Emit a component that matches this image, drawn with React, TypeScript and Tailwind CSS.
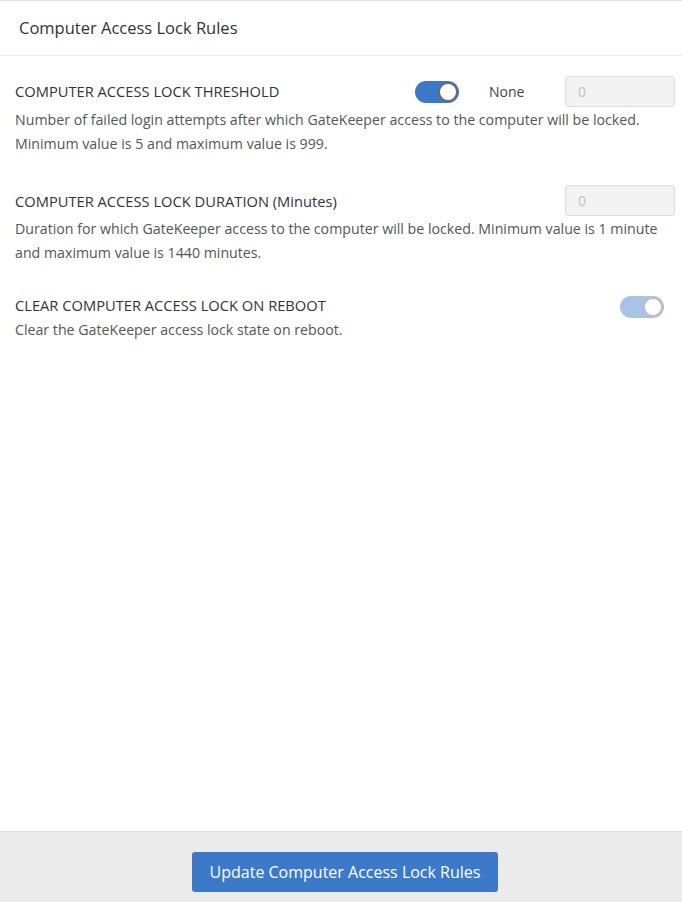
import React from "react";

function Toggle({ light = false }: { light?: boolean }) {
  return (
    <div
      className={
        "relative h-[22px] w-[44px] shrink-0 rounded-full " +
        (light ? "bg-[#a9c3e6]" : "bg-[#3c78c8]")
      }
    >
      <div
        className={
          "absolute right-[1px] top-[1px] h-[20px] w-[20px] rounded-full bg-white border-[2px] " +
          (light ? "border-[#bfbfbf]" : "border-[#6b6b6b]")
        }
      />
    </div>
  );
}

function NumInput() {
  return (
    <div className="flex h-[31px] w-[110px] shrink-0 items-center rounded-[3px] border border-[#dcdcdc] bg-[#f3f3f3] pl-[12px] text-[14px] text-[#c4c4c4]">
      0
    </div>
  );
}

export default function App() {
  return (
    <div
      className="flex h-[902px] w-[682px] flex-col border-t border-[#e3e3e3] bg-white"
      style={{ fontFamily: '"Open Sans", "Noto Sans", sans-serif' }}
    >
      <div className="flex h-[55px] shrink-0 items-center border-b border-[#ececec] pl-[19px] text-[16.5px] text-[#333]">
        Computer Access Lock Rules
      </div>
      <div className="flex-1 pl-[15px] pr-[7px] pt-[20px]">
        <div>
          <div className="flex h-[31px] items-center">
            <div className="flex-1 text-[14.7px] text-[#333]">COMPUTER ACCESS LOCK THRESHOLD</div>
            <Toggle />
            <div className="ml-[30px] w-[40px] text-[14px] text-[#444]">None</div>
            <div className="ml-[36px]">
              <NumInput />
            </div>
          </div>
          <div className="mt-[1px] text-[14.2px] leading-[24px] text-[#555]">
            Number of failed login attempts after which GateKeeper access to the computer will be locked. Minimum value is 5 and maximum value is 999.
          </div>
        </div>
        <div className="mt-[29px]">
          <div className="flex h-[31px] items-center">
            <div className="flex-1 pt-[2px] text-[14.7px] text-[#333]">COMPUTER ACCESS LOCK DURATION (Minutes)</div>
            <NumInput />
          </div>
          <div className="mt-[1px] text-[14.2px] leading-[24px] text-[#555]">
            Duration for which GateKeeper access to the computer will be locked. Minimum value is 1 minute and maximum value is 1440 minutes.
          </div>
        </div>
        <div className="mt-[28px]">
          <div className="flex h-[24px] items-center">
            <div className="flex-1 pt-[1px] text-[14.7px] text-[#333]">CLEAR COMPUTER ACCESS LOCK ON REBOOT</div>
            <div className="mr-[11px] mt-[4px]">
              <Toggle light />
            </div>
          </div>
          <div className="mt-[1px] text-[14.2px] leading-[24px] text-[#555]">
            Clear the GateKeeper access lock state on reboot.
          </div>
        </div>
      </div>
      <div className="flex h-[71px] shrink-0 items-start justify-center border-t border-[#dddddd] bg-[#ebebeb] pl-[8px] pt-[20px]">
        <button className="h-[40px] w-[306px] rounded-[3px] bg-[#3d79c9] text-[16px] text-white">
          Update Computer Access Lock Rules
        </button>
      </div>
    </div>
  );
}
